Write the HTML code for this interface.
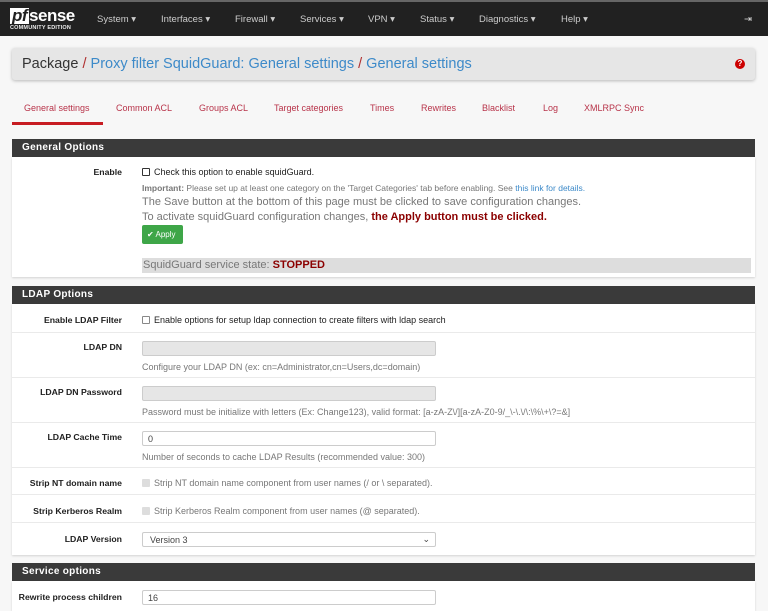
<!DOCTYPE html>
<html><head><style>
*{box-sizing:border-box;margin:0;padding:0}
body{width:768px;height:602px;overflow:hidden;background:#f7f7f7;font-family:"Liberation Sans",sans-serif;font-size:9px;color:#212121;position:relative}
.nav{position:absolute;left:0;top:0;width:768px;height:36px;background:#212121;border-top:2px solid #666}
.nav .m{position:absolute;top:12px;color:#ccc;font-size:9.5px}
.logo{position:absolute;left:10px;top:4px;color:#fff;font-weight:bold;font-size:17px;letter-spacing:-0.5px;white-space:nowrap;width:70px;height:30px}
.pf{display:inline-block;background:#fff;color:#212121;padding:0 2px;font-style:italic;line-height:16px}
.logo small{position:absolute;left:0;top:19px;font-size:5.5px;letter-spacing:0.2px;white-space:nowrap;color:#eee}
.bc{position:absolute;left:12px;top:48px;width:743px;height:32px;background:#e6e6e6;border-radius:3px;box-shadow:0 1px 3px rgba(0,0,0,.25);font-size:14.5px;padding:8px 10px;color:#333}
.bc a{color:#3d8ac9}.bc i{color:#b03030;font-style:normal}
.help{position:absolute;right:10px;top:11px;width:10px;height:10px;border-radius:50%;background:#c00;color:#fff;font-size:8px;font-weight:bold;text-align:center;line-height:10px}
.tab{position:absolute;top:103px;color:#b8344a;font-size:9px}
.ul{position:absolute;left:12px;top:122px;width:91px;height:3px;background:#c71c22}
.ph{position:absolute;left:12px;width:743px;height:18px;background:#3a3a3a;color:#fff;font-weight:bold;font-size:10px;padding:3px 10px;letter-spacing:.3px}
.pb{position:absolute;left:12px;width:743px;background:#fff;box-shadow:0 1px 2px rgba(0,0,0,.15)}
.lbl{position:absolute;right:646px;font-weight:bold;font-size:8.7px;text-align:right;white-space:nowrap}
.t{position:absolute;left:142px;white-space:nowrap;font-size:9px}
.g{color:#777}
.inp{position:absolute;left:142px;width:294px;height:15px;border:1px solid #ccc;border-radius:2px;background:#fff;font-size:9px;padding:2px 5px;color:#444}
.dis{background:#e6e6e6}
.sep{position:absolute;left:12px;width:743px;height:1px;background:#eaeaea}
.cb{display:inline-block;width:8px;height:8px;border:1px solid #888;border-radius:1px;vertical-align:-1px;margin-right:4px;background:#fff}
.cbg{background:#ddd;border-color:#ddd}
</style></head><body>
<div class="nav">
<div class="logo"><span class="pf">pf</span>sense<small>COMMUNITY EDITION</small></div>
<span class="m" style="left:97px">System ▾</span><span class="m" style="left:161px">Interfaces ▾</span><span class="m" style="left:235px">Firewall ▾</span><span class="m" style="left:300px">Services ▾</span><span class="m" style="left:368px">VPN ▾</span><span class="m" style="left:420px">Status ▾</span><span class="m" style="left:479px">Diagnostics ▾</span><span class="m" style="left:561px">Help ▾</span><span class="m" style="left:744px;color:#ddd">⇥</span>
</div>
<div class="bc">Package <i>/</i> <a>Proxy filter SquidGuard: General settings</a> <i>/</i> <a>General settings</a><div class="help">?</div></div>
<span class="tab" style="left:24px">General settings</span><span class="tab" style="left:116px">Common ACL</span><span class="tab" style="left:199px">Groups ACL</span><span class="tab" style="left:274px">Target categories</span><span class="tab" style="left:370px">Times</span><span class="tab" style="left:421px">Rewrites</span><span class="tab" style="left:482px">Blacklist</span><span class="tab" style="left:543px">Log</span><span class="tab" style="left:584px">XMLRPC Sync</span>
<div class="ul"></div>

<div class="ph" style="top:139px">General Options</div>
<div class="pb" style="top:157px;height:120px"></div>
<div class="lbl" style="top:167px">Enable</div>
<div class="t" style="top:167px"><span class="cb" style="border:1.5px solid #333"></span>Check this option to enable squidGuard.</div>
<div class="t" style="top:183px;font-size:8.5px"><b class="g">Important:</b> <span class="g">Please set up at least one category on the 'Target Categories' tab before enabling. See </span><span style="color:#3d8ac9">this link for details.</span></div>
<div class="t g" style="top:196px;font-size:11px">The Save button at the bottom of this page must be clicked to save configuration changes.</div>
<div class="t g" style="top:211px;font-size:11px">To activate squidGuard configuration changes, <b style="color:#8b0000">the Apply button must be clicked.</b></div>
<div style="position:absolute;left:142px;top:225px;width:41px;height:19px;background:#3ea648;border-radius:2px;color:#fff;font-size:8px;padding:5px 0 0 5px">✔ Apply</div>
<div style="position:absolute;left:142px;top:258px;width:609px;height:15px;background:#ddd;font-size:11px;color:#777;padding:1px 1px">SquidGuard service state: <b style="color:#8b0000">STOPPED</b></div>

<div class="ph" style="top:286px">LDAP Options</div>
<div class="pb" style="top:304px;height:251px"></div>
<div class="lbl" style="top:315px">Enable LDAP Filter</div>
<div class="t" style="top:315px"><span class="cb"></span>Enable options for setup ldap connection to create filters with ldap search</div>
<div class="sep" style="top:332px"></div>
<div class="lbl" style="top:342px">LDAP DN</div>
<div class="inp dis" style="top:341px"></div>
<div class="t g" style="top:362px">Configure your LDAP DN (ex: cn=Administrator,cn=Users,dc=domain)</div>
<div class="sep" style="top:377px"></div>
<div class="lbl" style="top:387px">LDAP DN Password</div>
<div class="inp dis" style="top:386px"></div>
<div class="t g" style="top:407px">Password must be initialize with letters (Ex: Change123), valid format: [a-zA-Z\/][a-zA-Z0-9/_\-\.\/\:\%\+\?=&]</div>
<div class="sep" style="top:422px"></div>
<div class="lbl" style="top:432px">LDAP Cache Time</div>
<div class="inp" style="top:431px">0</div>
<div class="t g" style="top:452px">Number of seconds to cache LDAP Results (recommended value: 300)</div>
<div class="sep" style="top:467px"></div>
<div class="lbl" style="top:478px">Strip NT domain name</div>
<div class="t g" style="top:478px"><span class="cb cbg"></span>Strip NT domain name component from user names (/ or \ separated).</div>
<div class="sep" style="top:494px"></div>
<div class="lbl" style="top:506px">Strip Kerberos Realm</div>
<div class="t g" style="top:506px"><span class="cb cbg"></span>Strip Kerberos Realm component from user names (@ separated).</div>
<div class="sep" style="top:522px"></div>
<div class="lbl" style="top:534px">LDAP Version</div>
<div class="inp" style="top:532px;padding-left:7px">Version 3<span style="position:absolute;right:5px;top:1px">⌄</span></div>

<div class="ph" style="top:563px">Service options</div>
<div class="pb" style="top:581px;height:30px"></div>
<div class="lbl" style="top:592px">Rewrite process children</div>
<div class="inp" style="top:590px">16</div>
</body></html>
